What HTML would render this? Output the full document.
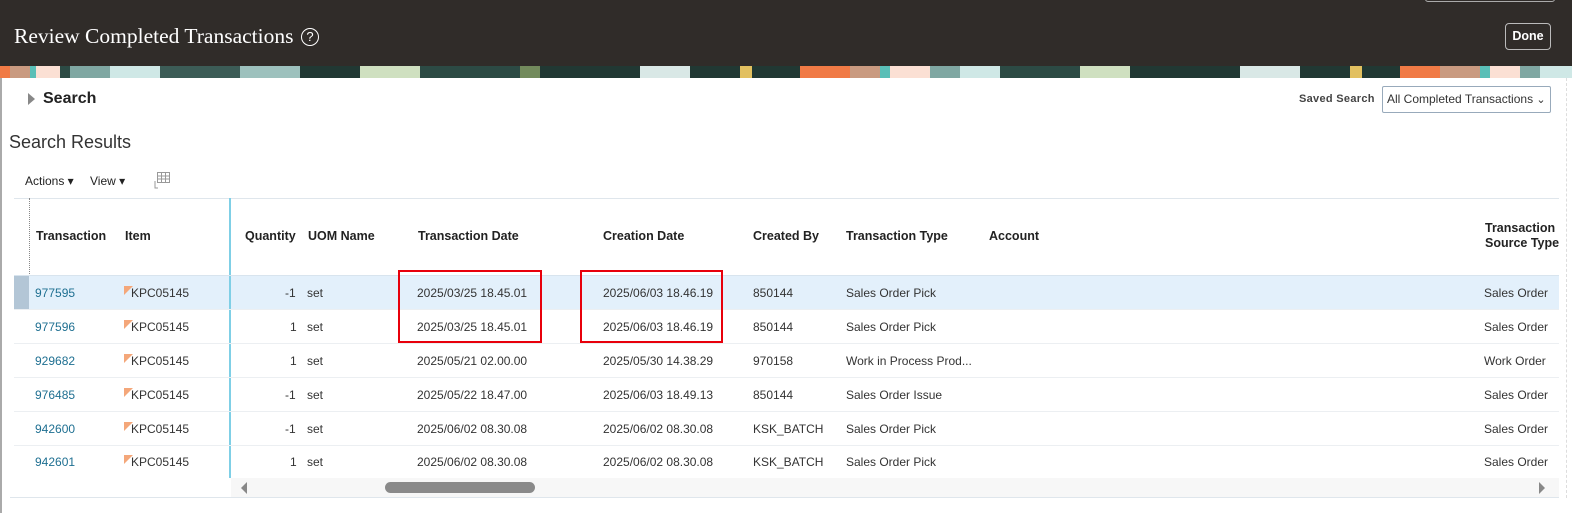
<!DOCTYPE html>
<html><head><style>
*{margin:0;padding:0;box-sizing:border-box}
body{width:1572px;height:513px;background:#fff;font-family:"Liberation Sans",Arial,sans-serif;position:relative;overflow:hidden;color:#333}
.a{position:absolute;white-space:nowrap}
.hdr{left:0;top:0;width:1572px;height:66px;background:#302c29}
.ban{left:0;top:66px;width:1572px;height:12px;background:linear-gradient(90deg,#f07a45 0 10px,#c99a80 10px 30px,#5abfb7 30px 36px,#fbe0d4 36px 60px,#2c4a44 60px 70px,#7fa7a2 70px 110px,#cfe8e6 110px 160px,#3c5c56 160px 240px,#9dc1bd 240px 300px,#213833 300px 360px,#cfe0c0 360px 420px,#2c4a44 420px 520px,#728a5c 520px 540px,#213833 540px 640px,#d9e8e6 640px 690px,#213833 690px 740px,#e2c060 740px 752px,#213833 752px 800px,#f07a45 800px 850px,#c99a80 850px 880px,#5abfb7 880px 890px,#fbe0d4 890px 930px,#7fa7a2 930px 960px,#cfe8e6 960px 1000px,#2c4a44 1000px 1080px,#cfe0c0 1080px 1130px,#213833 1130px 1240px,#d9e8e6 1240px 1300px,#213833 1300px 1350px,#e2c060 1350px 1362px,#213833 1362px 1400px,#f07a45 1400px 1440px,#c99a80 1440px 1480px,#5abfb7 1480px 1490px,#fbe0d4 1490px 1520px,#7fa7a2 1520px 1540px,#cfe8e6 1540px 1572px)}
.th{font-weight:bold;font-size:12.5px;color:#222}
.td{font-size:12px;color:#333}
.lk{color:#1e6f91}
.row{left:14px;width:1545px;height:34px;border-bottom:1px solid #eceff2}
.flag{position:absolute;width:0;height:0;border-top:9px solid #f4a77a;border-right:9px solid transparent}
</style></head><body>
<div class="a hdr"></div>
<div class="a" style="left:1425px;top:-6px;width:130px;height:8px;border:1px solid #aaa;border-radius:3px"></div>
<div class="a" style="left:14px;top:24px;font-family:'Liberation Serif',serif;font-size:21.5px;color:#fff">Review Completed Transactions</div>
<div class="a" style="left:301px;top:28px;width:18px;height:18px;border:1.5px solid #fff;border-radius:50%;color:#fff;font-size:13px;text-align:center;line-height:15px">?</div>
<div class="a" style="left:1505px;top:23px;width:46px;height:27px;border:1px solid #bbb;border-radius:4px;color:#fff;font-weight:bold;font-size:12.5px;text-align:center;line-height:25px">Done</div>
<div class="a ban"></div>
<div class="a" style="left:0;top:78px;width:2px;height:435px;background:#aaa"></div>
<div class="a" style="left:28px;top:93px;width:0;height:0;border-left:7px solid #888;border-top:6px solid transparent;border-bottom:6px solid transparent"></div>
<div class="a" style="left:43px;top:90px;font-weight:bold;font-size:16px;color:#222">Search</div>
<div class="a" style="left:1299px;top:93px;font-weight:bold;font-size:11px;color:#444;letter-spacing:0.3px">Saved Search</div>
<div class="a" style="left:1382px;top:86px;width:169px;height:27px;border:1px solid #98aabb;border-radius:2px;font-size:12px;color:#333;line-height:25px;padding-left:4px;overflow:hidden">All Completed Transactions <span style="font-size:11px">&#8964;</span></div>
<div class="a" style="left:9px;top:132px;font-size:18px;color:#333">Search Results</div>
<div class="a" style="left:25px;top:174px;font-size:12px;color:#222">Actions ▾</div>
<div class="a" style="left:90px;top:174px;font-size:12px;color:#222">View ▾</div>
<svg class="a" style="left:153px;top:172px" width="20" height="18"><g fill="none" stroke="#999" stroke-width="1"><rect x="4.5" y="0.5" width="12" height="10"/><path d="M4.5 4h12M4.5 7h12M8.5 .5v10M12.5 .5v10M2 9v7h3"/></g></svg>
<div class="a" style="left:14px;top:198px;width:1545px;height:1px;background:#dfe6ec"></div>
<div class="a" style="left:14px;top:198px;width:16px;height:78px;border-right:1px dotted #888;border-bottom:1px dotted #888"></div>
<div class="a" style="left:229px;top:198px;width:2px;height:280px;background:#7fcfe6"></div>
<div class="a" style="left:14px;top:275px;width:1545px;height:1px;background:#d8e4ee"></div>
<div class="a th" style="left:36px;top:229px">Transaction</div>
<div class="a th" style="left:125px;top:229px">Item</div>
<div class="a th" style="left:245px;top:229px">Quantity</div>
<div class="a th" style="left:308px;top:229px">UOM Name</div>
<div class="a th" style="left:418px;top:229px">Transaction Date</div>
<div class="a th" style="left:603px;top:229px">Creation Date</div>
<div class="a th" style="left:753px;top:229px">Created By</div>
<div class="a th" style="left:846px;top:229px">Transaction Type</div>
<div class="a th" style="left:989px;top:229px">Account</div>
<div class="a th" style="left:1485px;top:221px;line-height:15px;width:74px;overflow:hidden">Transaction<br>Source Type</div>
<div class="a" style="left:14px;top:276px;width:1545px;height:34px;background:#e3f0fb"></div>
<div class="a" style="left:14px;top:276px;width:15px;height:34px;background:#b3c6d6"></div>
<div class="a" style="left:229px;top:276px;width:2px;height:34px;background:#7fcfe6"></div>

<div class="a row" style="top:276px"></div>
<div class="a row" style="top:310px"></div>
<div class="a row" style="top:344px"></div>
<div class="a row" style="top:378px"></div>
<div class="a row" style="top:412px"></div>

<div class="a td" style="left:0;top:286px;width:1572px;height:200px">
<div class="a lk" style="left:35px;top:0">977595</div><div class="flag" style="left:124px;top:0"></div><div class="a" style="left:131px;top:0">KPC05145</div><div class="a" style="left:285px;top:0">-1</div><div class="a" style="left:307px;top:0">set</div><div class="a" style="left:417px;top:0">2025/03/25 18.45.01</div><div class="a" style="left:603px;top:0">2025/06/03 18.46.19</div><div class="a" style="left:753px;top:0">850144</div><div class="a" style="left:846px;top:0">Sales Order Pick</div><div class="a" style="left:1484px;top:0">Sales Order</div>
<div class="a lk" style="left:35px;top:34px">977596</div><div class="flag" style="left:124px;top:34px"></div><div class="a" style="left:131px;top:34px">KPC05145</div><div class="a" style="left:290px;top:34px">1</div><div class="a" style="left:307px;top:34px">set</div><div class="a" style="left:417px;top:34px">2025/03/25 18.45.01</div><div class="a" style="left:603px;top:34px">2025/06/03 18.46.19</div><div class="a" style="left:753px;top:34px">850144</div><div class="a" style="left:846px;top:34px">Sales Order Pick</div><div class="a" style="left:1484px;top:34px">Sales Order</div>
<div class="a lk" style="left:35px;top:68px">929682</div><div class="flag" style="left:124px;top:68px"></div><div class="a" style="left:131px;top:68px">KPC05145</div><div class="a" style="left:290px;top:68px">1</div><div class="a" style="left:307px;top:68px">set</div><div class="a" style="left:417px;top:68px">2025/05/21 02.00.00</div><div class="a" style="left:603px;top:68px">2025/05/30 14.38.29</div><div class="a" style="left:753px;top:68px">970158</div><div class="a" style="left:846px;top:68px">Work in Process Prod...</div><div class="a" style="left:1484px;top:68px">Work Order</div>
<div class="a lk" style="left:35px;top:102px">976485</div><div class="flag" style="left:124px;top:102px"></div><div class="a" style="left:131px;top:102px">KPC05145</div><div class="a" style="left:285px;top:102px">-1</div><div class="a" style="left:307px;top:102px">set</div><div class="a" style="left:417px;top:102px">2025/05/22 18.47.00</div><div class="a" style="left:603px;top:102px">2025/06/03 18.49.13</div><div class="a" style="left:753px;top:102px">850144</div><div class="a" style="left:846px;top:102px">Sales Order Issue</div><div class="a" style="left:1484px;top:102px">Sales Order</div>
<div class="a lk" style="left:35px;top:136px">942600</div><div class="flag" style="left:124px;top:136px"></div><div class="a" style="left:131px;top:136px">KPC05145</div><div class="a" style="left:285px;top:136px">-1</div><div class="a" style="left:307px;top:136px">set</div><div class="a" style="left:417px;top:136px">2025/06/02 08.30.08</div><div class="a" style="left:603px;top:136px">2025/06/02 08.30.08</div><div class="a" style="left:753px;top:136px">KSK_BATCH</div><div class="a" style="left:846px;top:136px">Sales Order Pick</div><div class="a" style="left:1484px;top:136px">Sales Order</div>
<div class="a lk" style="left:35px;top:169px">942601</div><div class="flag" style="left:124px;top:169px"></div><div class="a" style="left:131px;top:169px">KPC05145</div><div class="a" style="left:290px;top:169px">1</div><div class="a" style="left:307px;top:169px">set</div><div class="a" style="left:417px;top:169px">2025/06/02 08.30.08</div><div class="a" style="left:603px;top:169px">2025/06/02 08.30.08</div><div class="a" style="left:753px;top:169px">KSK_BATCH</div><div class="a" style="left:846px;top:169px">Sales Order Pick</div><div class="a" style="left:1484px;top:169px">Sales Order</div>
</div>

<div class="a" style="left:398px;top:270px;width:144px;height:73px;border:2px solid #e8000b"></div>
<div class="a" style="left:580px;top:270px;width:143px;height:73px;border:2px solid #e8000b"></div>

<div class="a" style="left:231px;top:478px;width:1328px;height:19px;background:#f7f7f7"></div>
<div class="a" style="left:241px;top:482px;width:0;height:0;border-right:6px solid #888;border-top:6px solid transparent;border-bottom:6px solid transparent"></div>
<div class="a" style="left:1539px;top:482px;width:0;height:0;border-left:6px solid #888;border-top:6px solid transparent;border-bottom:6px solid transparent"></div>
<div class="a" style="left:385px;top:482px;width:150px;height:11px;background:#8a8a8a;border-radius:6px"></div>
<div class="a" style="left:10px;top:497px;width:1549px;height:1px;background:#dfe6ec"></div>
<div class="a" style="left:1566px;top:78px;width:1px;height:420px;border-left:1px dashed #ddd"></div>
</body></html>
